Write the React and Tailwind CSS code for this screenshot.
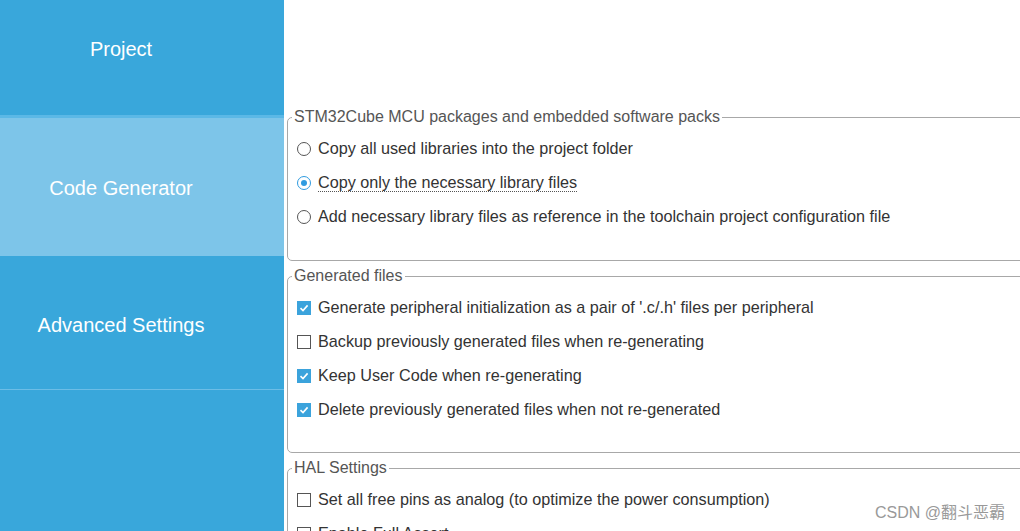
import { useState } from "react";

function Radio({ checked }) {
  return checked ? (
    <span className="w-[14px] h-[14px] rounded-full border border-[#2f9be0] flex items-center justify-center shrink-0 bg-white">
      <span className="w-[6px] h-[6px] rounded-full bg-[#2f9be0]" />
    </span>
  ) : (
    <span className="w-[14px] h-[14px] rounded-full border border-[#555] shrink-0 bg-white" />
  );
}

function Check({ checked }) {
  return checked ? (
    <span className="w-[14px] h-[14px] bg-[#3ba3dc] flex items-center justify-center shrink-0">
      <svg width="10" height="10" viewBox="0 0 10 10">
        <path d="M1.5 5.2 L4 7.6 L8.6 2.4" fill="none" stroke="white" strokeWidth="1.6" />
      </svg>
    </span>
  ) : (
    <span className="w-[14px] h-[14px] border border-[#555] shrink-0 bg-white" />
  );
}

function Row({ children, icon, dotted }) {
  return (
    <div className="h-[34px] pt-[1px] flex items-center gap-[7px] whitespace-nowrap">
      {icon}
      <span className={dotted ? "border-b border-dotted border-[#555] leading-[18px]" : ""}>{children}</span>
    </div>
  );
}

function Group({ title, children, pb }) {
  return (
    <fieldset className={`border border-[#a8a8a8] rounded-[5px] pl-[9px] pt-[5px] -mr-6 ${pb}`}>
      <legend className="-ml-[5px] px-[2px] text-[16px] leading-[18px] text-[#555]">{title}</legend>
      {children}
    </fieldset>
  );
}

export default function App() {
  const [tab] = useState("code");
  const tabs = [
    { id: "project", label: "Project", cls: "h-[118px] pb-[17px] border-b-[3px] border-[#5bb8e6]" },
    { id: "code", label: "Code Generator", cls: "h-[138px] pt-[2px]" },
    { id: "advanced", label: "Advanced Settings", cls: "h-[134px] pt-[5px] border-b border-[#6cbde6]" },
  ];

  return (
    <div className="relative w-[1020px] h-[531px] overflow-hidden flex bg-white" style={{ fontFamily: '"Liberation Sans", Arial, sans-serif' }}>
      {/* Sidebar */}
      <div className="w-[284px] shrink-0 bg-[#39a7db] flex flex-col">
        {tabs.map((t) => (
          <div
            key={t.id}
            className={`${t.cls} pr-[42px] flex items-center justify-center text-[20px] text-white ${
              tab === t.id ? "bg-[#7dc5e9]" : "bg-[#39a7db]"
            }`}
          >
            {t.label}
          </div>
        ))}
      </div>

      {/* Content */}
      <div className="flex-1 overflow-hidden pt-[108px] pl-[3px] text-[16.2px] text-[#333] flex flex-col gap-[6px]">
        <Group title="STM32Cube MCU packages and embedded software packs" pb="pb-[27px]">
          <Row icon={<Radio />}>Copy all used libraries into the project folder</Row>
          <Row icon={<Radio checked />} dotted>Copy only the necessary library files</Row>
          <Row icon={<Radio />}>Add necessary library files as reference in the toolchain project configuration file</Row>
        </Group>

        <Group title="Generated files" pb="pb-[26px]">
          <Row icon={<Check checked />}>Generate peripheral initialization as a pair of '.c/.h' files per peripheral</Row>
          <Row icon={<Check />}>Backup previously generated files when re-generating</Row>
          <Row icon={<Check checked />}>Keep User Code when re-generating</Row>
          <Row icon={<Check checked />}>Delete previously generated files when not re-generated</Row>
        </Group>

        <Group title="HAL Settings" pb="pb-[26px]">
          <Row icon={<Check />}>Set all free pins as analog (to optimize the power consumption)</Row>
          <Row icon={<Check />}>Enable Full Assert</Row>
        </Group>
      </div>

      {/* Watermark */}
      <div
        className="absolute right-[15px] bottom-[6px] text-[16px] text-[#999]"
        style={{ fontFamily: '"Liberation Sans", "Noto Sans CJK SC", sans-serif' }}
      >
        CSDN @翻斗恶霸
      </div>
    </div>
  );
}
